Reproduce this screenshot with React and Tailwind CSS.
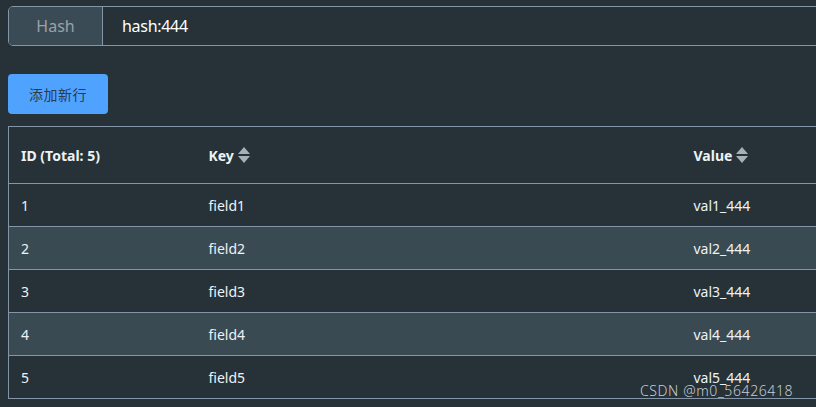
import React from "react";

const rows = [1, 2, 3, 4, 5];

function SortIcon() {
  return (
    <svg width="12" height="18" viewBox="0 0 12 18" className="ml-[4px] inline-block">
      <polygon points="6,1 12,8 0,8" fill="#a7b0b8" />
      <polygon points="0,10 12,10 6,17" fill="#a7b0b8" />
    </svg>
  );
}

export default function App() {
  return (
    <div
      className="relative w-[816px] h-[407px] overflow-hidden bg-[#263238] text-[#eef2f5]"
      style={{ fontFamily: '"Noto Sans", "Noto Sans CJK SC", sans-serif' }}
    >
      <div className="w-[860px] pl-2 pt-[6px]">
        <div className="flex h-[40px] w-full border border-[#8595a8] rounded-[5px] overflow-hidden">
          <div className="w-[94px] flex items-center justify-center bg-[#3b4b55] border-r border-[#8595a8] text-[16px] text-[#98a2a9]">
            Hash
          </div>
          <div className="flex items-center pl-[19px] text-[16px] tracking-[-0.3px] text-white">hash:444</div>
        </div>

        <button className="mt-[28px] w-[100px] h-[40px] rounded-[4px] bg-[#4fa3ff] text-[14px] tracking-[0.5px] text-[#2b3b48]">
          添加新行
        </button>

        <table className="mt-[12px] w-full border-collapse border border-[#8595a8] text-[14px]">
          <thead>
            <tr className="h-[57px] border-b border-[#8595a8]">
              <th className="w-[188px] pl-[12px] text-left font-bold">ID (Total: 5)</th>
              <th className="w-[485px] pl-[12px] text-left font-bold">
                <span className="inline-flex items-center">Key<SortIcon /></span>
              </th>
              <th className="pl-[12px] text-left font-bold">
                <span className="inline-flex items-center">Value<SortIcon /></span>
              </th>
            </tr>
          </thead>
          <tbody>
            {rows.map((n) => (
              <tr
                key={n}
                className={`h-[43px] border-b border-[#8595a8] ${n % 2 === 0 ? "bg-[#394a53]" : ""}`}
              >
                <td className="pl-[12px]">{n}</td>
                <td className="pl-[12px]">field{n}</td>
                <td className="pl-[12px]">val{n}_444</td>
              </tr>
            ))}
          </tbody>
        </table>
      </div>
      <div className="absolute left-[640px] top-[380px] text-[14px] text-[#c8cdd0] font-light tracking-[0.6px]">
        CSDN @m0_56426418
      </div>
    </div>
  );
}
